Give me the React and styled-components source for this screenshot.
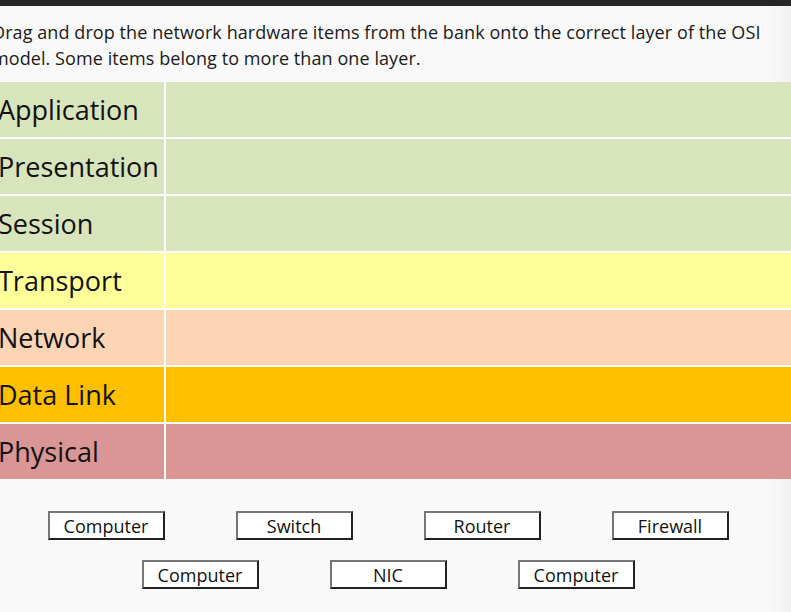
import styled, { createGlobalStyle } from 'styled-components'

const GlobalStyle = createGlobalStyle`
  html, body {
    margin: 0;
    padding: 0;
    overflow: hidden;
  }
  body {
    background: linear-gradient(to right, #f9f9f9 0%, #f9f9f9 97%, #f1f1f1 100%);
    font-family: 'Open Sans', 'Liberation Sans', sans-serif;
    color: #111;
  }
`

const TopBar = styled.div`
  height: 6px;
  background: #262626;
`

const Page = styled.div`
  width: 800px;
  margin-left: -8px;
`

const Intro = styled.p`
  margin: 13px 0 11px;
  font-size: 18px;
  line-height: 26px;
  letter-spacing: 0.08px;
  color: #1a1a1a;
`

const Layers = styled.div`
  display: grid;
  grid-template-columns: 172px 1fr;
  gap: 2px;
  background: #ffffff;
`

const Label = styled.div`
  height: 55px;
  display: flex;
  align-items: center;
  padding-left: 6px;
  font-size: 27px;
  background: ${p => p.$bg};
  color: #111;
`

const Drop = styled.div`
  height: 55px;
  background: ${p => p.$bg};
`

const Bank = styled.div`
  display: flex;
  flex-wrap: wrap;
  justify-content: center;
  column-gap: 71px;
  row-gap: 20px;
  width: 792px;
  padding-top: 32px;
`

const Item = styled.div`
  box-sizing: border-box;
  width: 117px;
  height: 29px;
  display: flex;
  align-items: center;
  justify-content: center;
  background: #ffffff;
  border: 2px outset #767676;
  font-size: 18px;
  color: #111;
  cursor: grab;
`

const layers = [
  { name: 'Application', bg: '#d8e4bc' },
  { name: 'Presentation', bg: '#d8e4bc' },
  { name: 'Session', bg: '#d8e4bc' },
  { name: 'Transport', bg: '#ffff99' },
  { name: 'Network', bg: '#fcd5b4' },
  { name: 'Data Link', bg: '#ffc000' },
  { name: 'Physical', bg: '#da9694' },
]

const items = ['Computer', 'Switch', 'Router', 'Firewall', 'Computer', 'NIC', 'Computer']

export default function App() {
  return (
    <>
      <GlobalStyle />
      <TopBar />
      <Page>
        <Intro>
          Drag and drop the network hardware items from the bank onto the correct layer of the OSI
          model. Some items belong to more than one layer.
        </Intro>
        <Layers>
          {layers.map(l => [
            <Label key={l.name} $bg={l.bg}>{l.name}</Label>,
            <Drop key={l.name + '-drop'} $bg={l.bg} />,
          ])}
        </Layers>
        <Bank>
          {items.map((it, i) => (
            <Item key={i}>{it}</Item>
          ))}
        </Bank>
      </Page>
    </>
  )
}
